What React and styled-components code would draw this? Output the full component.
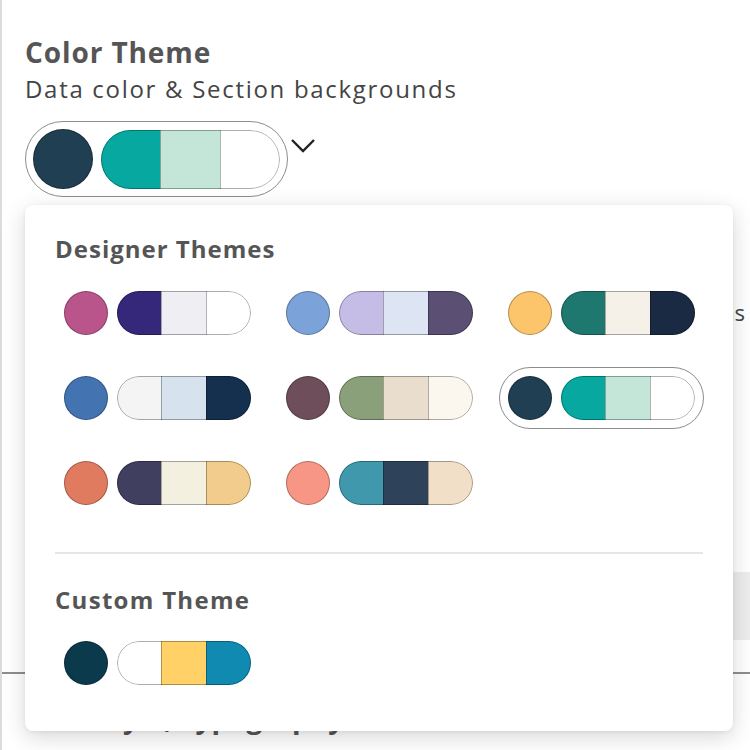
import React from "react";
import styled, { createGlobalStyle } from "styled-components";

const GlobalStyle = createGlobalStyle`
  html, body {
    margin: 0;
    padding: 0;
    background: #ffffff;
  }
  body {
    font-family: "Open Sans", "Liberation Sans", sans-serif;
    color: #555555;
  }
`;

const Page = styled.div`
  position: relative;
  width: 750px;
  height: 750px;
  box-sizing: border-box;
  border-left: 2px solid #dcdcdc;
  padding: 36px 0 0 23px;
  overflow: hidden;
`;

const Title = styled.h1`
  margin: 0;
  font-size: 28px;
  line-height: 32px;
  font-weight: 700;
  letter-spacing: 0.9px;
  color: #555555;
`;

const Subtitle = styled.p`
  margin: 7px 0 0;
  font-size: 24px;
  line-height: 28px;
  font-weight: 400;
  color: #444444;
  letter-spacing: 1.7px;
`;

const SelectorRow = styled.div`
  position: relative;
  display: flex;
  align-items: flex-start;
  margin-top: 18px;
`;

const Chevron = styled.svg`
  margin: 17px 0 0 2px;
  flex: none;
`;

const Item = styled.div`
  display: flex;
  align-items: center;
  gap: ${({ $size }) => ($size === "lg" ? "8px" : "9px")};
  padding: ${({ $size }) => ($size === "lg" ? "7px" : "8px")};
  border: 1.5px solid ${({ $selected }) => ($selected ? "#8c8c8c" : "transparent")};
  border-radius: 999px;
  width: max-content;
`;

const Dot = styled.div`
  width: ${({ $size }) => ($size === "lg" ? "60px" : "44px")};
  height: ${({ $size }) => ($size === "lg" ? "60px" : "44px")};
  border-radius: 50%;
  box-sizing: border-box;
  border: 1.5px solid rgba(0, 0, 0, 0.28);
  flex: none;
`;

const Pill = styled.div`
  position: relative;
  display: flex;
  width: ${({ $size }) => ($size === "lg" ? "179px" : "134px")};
  height: ${({ $size }) => ($size === "lg" ? "59px" : "44px")};
  border-radius: 999px;
  overflow: hidden;
  flex: none;

  &::after {
    content: "";
    position: absolute;
    inset: 0;
    border-radius: inherit;
    border: 1.5px solid rgba(0, 0, 0, 0.32);
    pointer-events: none;
  }
`;

const Segment = styled.div`
  flex: 1;
  & + & {
    border-left: 1.5px solid rgba(0, 0, 0, 0.3);
  }
`;

const Popup = styled.div`
  position: absolute;
  top: calc(100% + 8px);
  left: 0;
  width: 708px;
  box-sizing: border-box;
  background: #ffffff;
  border-radius: 8px;
  box-shadow: 0 6px 22px rgba(0, 0, 0, 0.16), 0 1px 4px rgba(0, 0, 0, 0.06);
  padding: 29px 30px 37px;
  z-index: 10;
`;

const SectionTitle = styled.h2`
  margin: 0;
  font-size: 24px;
  line-height: 30px;
  font-weight: 700;
  letter-spacing: ${({ $spacing }) => $spacing || "1px"};
  color: #555555;
`;

const ThemeGrid = styled.div`
  display: grid;
  grid-template-columns: repeat(3, 206px);
  column-gap: 16px;
  row-gap: 23px;
  margin-top: ${({ $top }) => $top || "18px"};
`;

const Divider = styled.div`
  height: 1.5px;
  background: #e6e6e6;
  margin: 38px 0 31px;
`;

const HiddenRow = styled.div`
  margin-top: 100px;
  padding-right: 5px;
  text-align: right;
  font-size: 22px;
  line-height: 30px;
  color: #444444;
`;

const GreyBlock = styled.div`
  margin: 245px 0 0 auto;
  width: 220px;
  height: 68px;
  background: #ededed;
`;

const Rule = styled.div`
  margin: 32px 0 0 -23px;
  height: 1.5px;
  background: #8e8e8e;
`;

const NextTitle = styled.h3`
  margin: 27px 0 0;
  font-size: 28px;
  line-height: 32px;
  font-weight: 700;
  color: #555555;
`;

const designer = [
  { dot: "#b9558a", segs: ["#35287a", "#eeeef3", "#ffffff"] },
  { dot: "#7ba3d9", segs: ["#c6bde6", "#dde4f3", "#5b4f74"] },
  { dot: "#fcc56b", segs: ["#1e7870", "#f5f1e9", "#1a2a42"] },
  { dot: "#4373b0", segs: ["#f4f4f4", "#d6e3ef", "#15304f"] },
  { dot: "#6e4e5a", segs: ["#8aa07a", "#e9ddcd", "#fbf6ee"] },
  { dot: "#203f52", segs: ["#07a89f", "#c4e6d8", "#ffffff"], selected: true },
  { dot: "#e07b60", segs: ["#413f60", "#f3f0df", "#f2cc8c"] },
  { dot: "#f79684", segs: ["#3f98ab", "#2e425a", "#f1dfc8"] },
];

const custom = [{ dot: "#0b3a4c", segs: ["#ffffff", "#ffd166", "#118ab2"] }];

const ThemeSwatch = ({ theme, size, selected }) => (
  <Item $size={size} $selected={selected}>
    <Dot $size={size} style={{ background: theme.dot }} />
    <Pill $size={size}>
      {theme.segs.map((c, i) => (
        <Segment key={i} style={{ background: c }} />
      ))}
    </Pill>
  </Item>
);

const App = () => {
  return (
    <Page>
      <GlobalStyle />
      <Title>Color Theme</Title>
      <Subtitle>Data color &amp; Section backgrounds</Subtitle>
      <SelectorRow>
        <ThemeSwatch theme={designer[5]} size="lg" selected />
        <Chevron width="26" height="16" viewBox="0 0 26 16">
          <polyline
            points="2,2 13,13 24,2"
            fill="none"
            stroke="#222"
            strokeWidth="2.4"
          />
        </Chevron>
        <Popup>
          <SectionTitle>Designer Themes</SectionTitle>
          <ThemeGrid>
            {designer.map((t, i) => (
              <ThemeSwatch key={i} theme={t} selected={t.selected} />
            ))}
          </ThemeGrid>
          <Divider />
          <SectionTitle $spacing="1.3px">Custom Theme</SectionTitle>
          <ThemeGrid $top="17px">
            {custom.map((t, i) => (
              <ThemeSwatch key={i} theme={t} />
            ))}
          </ThemeGrid>
        </Popup>
      </SelectorRow>
      <HiddenRow>Highlight colors for charts &amp; icons</HiddenRow>
      <GreyBlock />
      <Rule />
      <NextTitle>Font Style, Typography</NextTitle>
    </Page>
  );
};

export default App;
